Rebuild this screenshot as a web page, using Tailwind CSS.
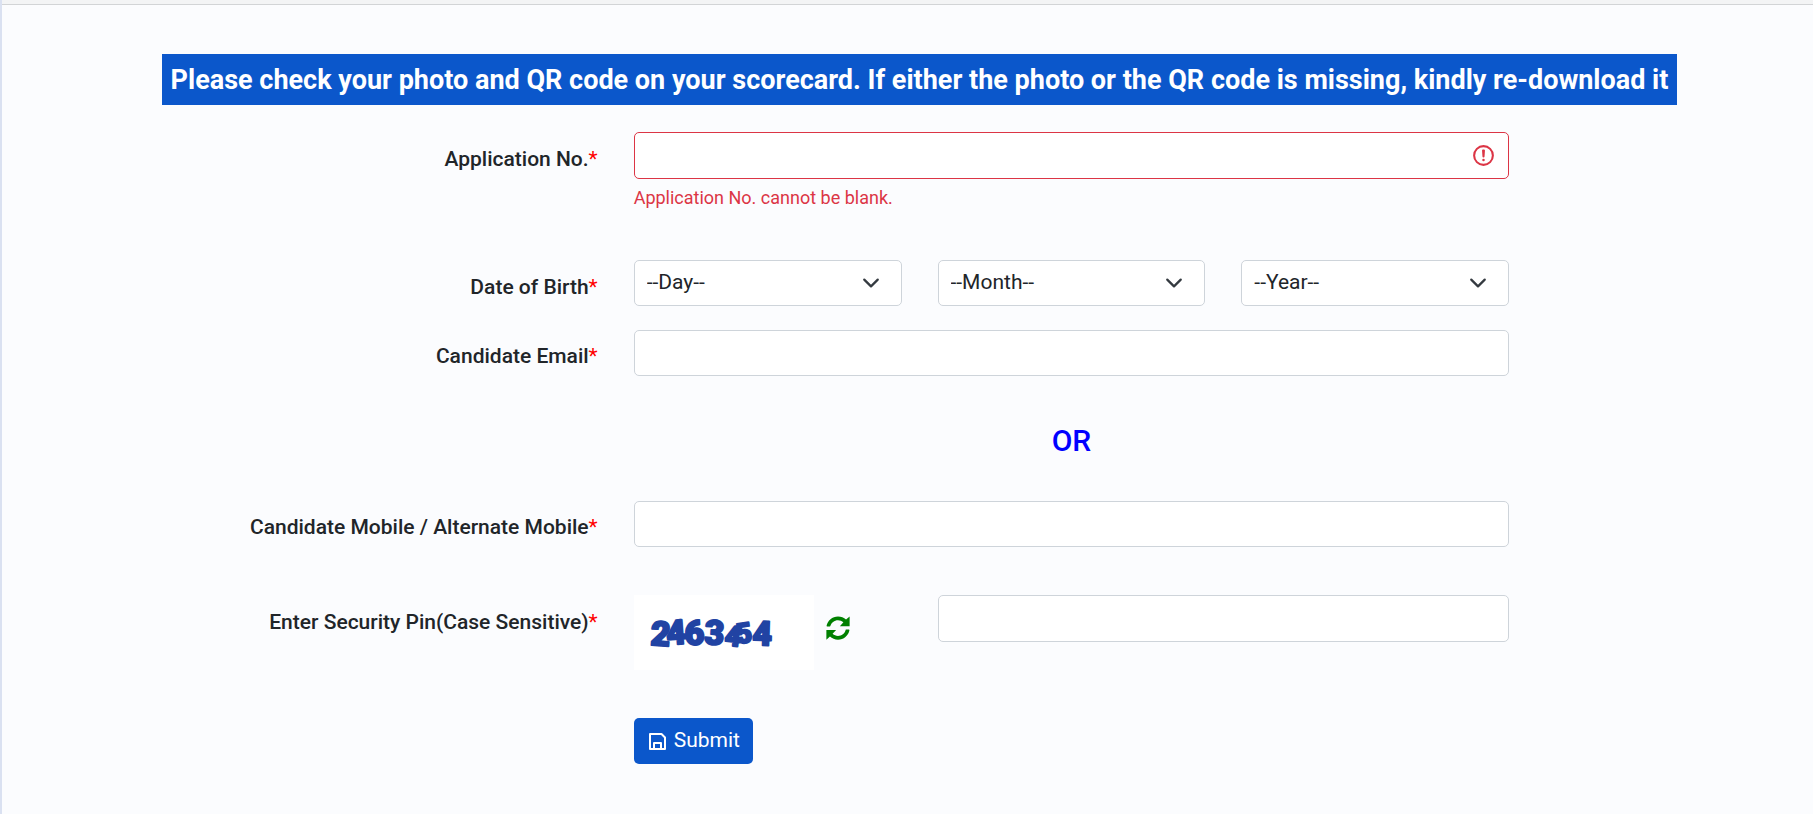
<!DOCTYPE html>
<html lang="en">
<head>
    <meta charset="UTF-8">
    <meta name="viewport" content="width=device-width, initial-scale=1.0">
    <title>Download Scorecard</title>
    <script src="https://cdn.jsdelivr.net/npm/@tailwindcss/browser@4"></script>
</head>
<body class="min-h-screen border-l-2 border-[#dae1f1] bg-[#fbfcfe] font-[Roboto,sans-serif] text-[21px] text-[#212529]">

    <!-- Bottom edge of the page header -->
    <header class="h-[5px] border-b border-[#d2d4d6] bg-[#f3f4f5]"></header>

    <main class="pt-[49px] pl-6">
        <!-- Notice -->
        <div class="mb-[27px] flex justify-center">
            <h1 class="bg-[#0b57cb] px-[9px] pt-[9px] pb-[7px] text-center text-[27px] leading-[35px] font-bold text-white">Please check your photo and QR code on your scorecard. If either the photo or the QR code is missing, kindly re-download it</h1>
        </div>

        <form>
            <!-- Application number -->
            <div class="mb-12 grid grid-cols-6 gap-x-9">
                <label for="application-no" class="col-span-2 pt-3 text-right leading-[30px] font-medium">Application No.<span class="font-normal text-[#ff0000]">*</span></label>
                <div class="col-span-3">
                    <div class="relative">
                        <input type="text" id="application-no" aria-describedby="application-no-error" class="block h-[47px] w-full rounded-[5px] border border-[#dc3545] bg-white px-3 pr-12 focus:outline-none">
                        <svg class="absolute top-[11px] right-[13px] size-[25px]" viewBox="0 0 12 12" fill="none" stroke="#dc3545">
                            <circle cx="6" cy="6" r="4.5"/>
                            <path d="M5.8 3.6h.4L6 6.5z" stroke-linejoin="round"/>
                            <circle cx="6" cy="8.2" r=".6" fill="#dc3545" stroke="none"/>
                        </svg>
                    </div>
                    <p id="application-no-error" class="mt-[5px] text-lg leading-7 text-[#dc3545]">Application No. cannot be blank.</p>
                </div>
            </div>

            <!-- Date of birth -->
            <div class="mb-6 grid grid-cols-6 gap-x-9">
                <label for="dob-day" class="col-span-2 pt-3 text-right leading-[30px] font-medium">Date of Birth<span class="font-normal text-[#ff0000]">*</span></label>
                <div class="relative">
                    <select id="dob-day" class="block h-[46px] w-full appearance-none rounded-[5px] border border-[#ced4da] bg-white px-3 focus:outline-none">
                        <option>--Day--</option>
                    </select>
                    <svg class="pointer-events-none absolute top-[14px] right-[22px] size-[18px]" viewBox="0 0 16 16" fill="none" stroke="#343a40" stroke-width="2" stroke-linecap="round" stroke-linejoin="round"><path d="m2 5 6 6 6-6"/></svg>
                </div>
                <div class="relative">
                    <select id="dob-month" aria-label="Month" class="block h-[46px] w-full appearance-none rounded-[5px] border border-[#ced4da] bg-white px-3 focus:outline-none">
                        <option>--Month--</option>
                    </select>
                    <svg class="pointer-events-none absolute top-[14px] right-[22px] size-[18px]" viewBox="0 0 16 16" fill="none" stroke="#343a40" stroke-width="2" stroke-linecap="round" stroke-linejoin="round"><path d="m2 5 6 6 6-6"/></svg>
                </div>
                <div class="relative">
                    <select id="dob-year" aria-label="Year" class="block h-[46px] w-full appearance-none rounded-[5px] border border-[#ced4da] bg-white px-3 focus:outline-none">
                        <option>--Year--</option>
                    </select>
                    <svg class="pointer-events-none absolute top-[14px] right-[22px] size-[18px]" viewBox="0 0 16 16" fill="none" stroke="#343a40" stroke-width="2" stroke-linecap="round" stroke-linejoin="round"><path d="m2 5 6 6 6-6"/></svg>
                </div>
            </div>

            <!-- Email or mobile -->
            <div class="grid grid-cols-6 gap-x-9">
                <label for="email" class="col-span-2 pt-[11px] text-right leading-[30px] font-medium">Candidate Email<span class="font-normal text-[#ff0000]">*</span></label>
                <input type="email" id="email" class="col-span-3 block h-[46px] w-full rounded-[5px] border border-[#ced4da] bg-white px-3 focus:outline-none">
            </div>
            <div class="mt-12 mb-11 grid grid-cols-6 gap-x-9">
                <p class="col-span-3 col-start-3 text-center text-[30px] leading-[33px] font-medium text-[#0000ff]">OR</p>
            </div>
            <div class="mb-12 grid grid-cols-6 gap-x-9">
                <label for="mobile" class="col-span-2 pt-[11px] text-right leading-[30px] font-medium">Candidate Mobile / Alternate Mobile<span class="font-normal text-[#ff0000]">*</span></label>
                <input type="tel" id="mobile" class="col-span-3 block h-[46px] w-full rounded-[5px] border border-[#ced4da] bg-white px-3 focus:outline-none">
            </div>

            <!-- Security pin -->
            <div class="mb-12 grid grid-cols-6 gap-x-9">
                <label for="pin" class="col-span-2 pt-3 text-right leading-[30px] font-medium">Enter Security Pin(Case Sensitive)<span class="font-normal text-[#ff0000]">*</span></label>
                <div class="flex items-start">
                    <svg class="h-[75px] w-[180px] shrink-0 bg-white font-[Roboto,sans-serif] text-[34px] font-black" viewBox="0 0 180 75" fill="#2143a3" stroke="#2143a3" stroke-width="2" stroke-linejoin="round" role="img" aria-label="Security pin">
                        <text x="16 33 51 70 90 103 118" y="50 50 50 49 50 49 50" rotate="4 -4 -2 3 6 -8 2">2463<tspan font-size="28">45</tspan>4</text>
                    </svg>
                    <button type="button" aria-label="Refresh security pin" class="mt-[21px] ml-3 cursor-pointer">
                        <svg class="size-6" viewBox="0 0 512 512" fill="#008000"><path d="M370.72 133.28C339.458 104.008 298.888 87.962 255.848 88c-77.458.068-144.328 53.178-162.791 126.85-1.344 5.363-6.122 9.15-11.651 9.15H24.103c-7.498 0-13.194-6.807-11.807-14.176C33.933 94.924 134.813 8 256 8c66.448 0 126.791 26.136 171.315 68.685L504 8V216H296L370.72 133.28zM32 296H216l-74.72 82.72c31.262 29.273 71.835 45.319 114.876 45.28 77.418-.07 144.315-53.144 162.787-126.849 1.344-5.363 6.122-9.15 11.651-9.15h57.304c7.498 0 13.194 6.807 11.807 14.176C478.067 417.076 377.187 504 256 504c-66.448 0-126.791-26.136-171.315-68.685L8 504V296z"/></svg>
                    </button>
                </div>
                <input type="text" id="pin" class="col-span-2 block h-[47px] w-full rounded-[5px] border border-[#ced4da] bg-white px-3 focus:outline-none">
            </div>

            <!-- Submit -->
            <div class="grid grid-cols-6 gap-x-9">
                <div class="col-span-3 col-start-3">
                    <button type="submit" class="flex h-[46px] items-center gap-2 rounded-[5px] bg-[#0b57cb] pr-[13px] pl-[15px] text-white">
                        <svg class="size-[17px]" viewBox="0 0 17 17" fill="none" stroke="currentColor" stroke-width="2" stroke-linejoin="round"><path d="M1 1h11.5L16 4.5V16H1z"/><path d="M5 16v-6h7v6"/></svg>
                        Submit
                    </button>
                </div>
            </div>
        </form>
    </main>

</body>
</html>
